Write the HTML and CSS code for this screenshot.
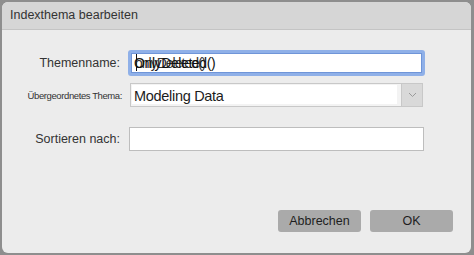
FILE: index.html
```html
<!DOCTYPE html>
<html lang="de">
<head>
    <meta charset="UTF-8">
    <title>Indexthema bearbeiten</title>
    <link rel="stylesheet" href="styles.css">
</head>
<body>
    <div class="window">
        <div class="titlebar">Indexthema bearbeiten</div>
        <div class="content">
            <div class="form">
                <label class="label">Themenname:</label>
                <div class="field focused">
                    <span class="caret"></span>
                    <span class="ghost">onlyDeleted()</span>
                    <span class="value">OnlyDeleted()</span>
                </div>

                <label class="label small">Übergeordnetes Thema:</label>
                <div class="select">
                    <div class="select-value">Modeling Data</div>
                    <div class="select-arrow">
                        <svg width="9" height="6" viewBox="0 0 9 6"><path d="M1 1l3.5 3.5L8 1" fill="none" stroke="#9a9a9a" stroke-width="1"/></svg>
                    </div>
                </div>

                <label class="label sort">Sortieren nach:</label>
                <div class="field plain"></div>
            </div>
            <div class="buttons">
                <button class="btn">Abbrechen</button>
                <button class="btn">OK</button>
            </div>
        </div>
    </div>
</body>
</html>
```

FILE: styles.css
```css
body {
    margin: 0;
    background: #8e8e8e;
    font-family: 'Liberation Sans', Arial, sans-serif;
    color: #222;
}
.window {
    margin: 2px 2px 0 2px;
    width: 469px;
    height: 251px;
    background: #ececec;
    border-radius: 6px;
    overflow: hidden;
    display: flex;
    flex-direction: column;
}
.titlebar {
    height: 27px;
    line-height: 27px;
    background: #d6d6d6;
    border-bottom: 1px solid #c4c4c4;
    padding-left: 8px;
    font-size: 12.5px;
    color: #333;
}
.content {
    flex: 1;
    display: flex;
    flex-direction: column;
}
.form {
    display: grid;
    grid-template-columns: 118px 297px;
    column-gap: 8px;
    align-items: center;
    margin-top: 20px;
}
.label {
    text-align: right;
    font-size: 12.5px;
    color: #333;
}
.label.small {
    font-size: 9.5px;
    letter-spacing: -0.4px;
    margin-right: -2px;
    margin-top: 7px;
    white-space: nowrap;
}
.label.sort {
    margin-top: 20px;
}
.field {
    height: 22px;
    background: #fff;
    position: relative;
    box-sizing: border-box;
}
.field.focused {
    height: 26px;
    border: 3px solid #8fb0e8;
    border-radius: 3px;
    box-shadow: inset 0 0 0 1px #6f95d8;
}
.field.plain {
    height: 24px;
    width: 295px;
    margin-left: 1px;
    margin-top: 20px;
    border: 1px solid #bdbdbd;
}
.caret {
    position: absolute;
    left: 5px;
    top: 1px;
    width: 1px;
    height: 17px;
    background: #111;
}
.value, .ghost {
    position: absolute;
    left: 3px;
    top: 2px;
    font-size: 14px;
    color: #111;
    letter-spacing: -0.4px;
}
.ghost {
    left: 4px;
    letter-spacing: -1px;
    color: #333;
}
.select {
    display: flex;
    height: 24px;
    width: 293px;
    margin-left: 2px;
    margin-top: 7px;
    box-sizing: border-box;
    border: 1px solid #c8c8c8;
    background: #f3f3f3;
}
.select-value {
    flex: 1;
    background: #fff;
    margin: 1px 4px 2px 1px;
    font-size: 14.5px;
    letter-spacing: -0.3px;
    line-height: 22px;
    height: 19px;
    overflow: hidden;
    padding-left: 2px;
    color: #1c1c1c;
}
.select-arrow {
    width: 20px;
    background: #d9d9d9;
    border-left: 1px solid #c8c8c8;
    display: flex;
    align-items: center;
    justify-content: center;
}
.buttons {
    display: flex;
    justify-content: flex-end;
    gap: 9px;
    margin-top: 59px;
    padding-right: 18px;
}
.btn {
    width: 83px;
    height: 22px;
    border: none;
    border-radius: 3px;
    background: #aaaaaa;
    font-family: 'Liberation Sans', Arial, sans-serif;
    font-size: 12.5px;
    color: #1e1e1e;
    padding: 0;
}
```
